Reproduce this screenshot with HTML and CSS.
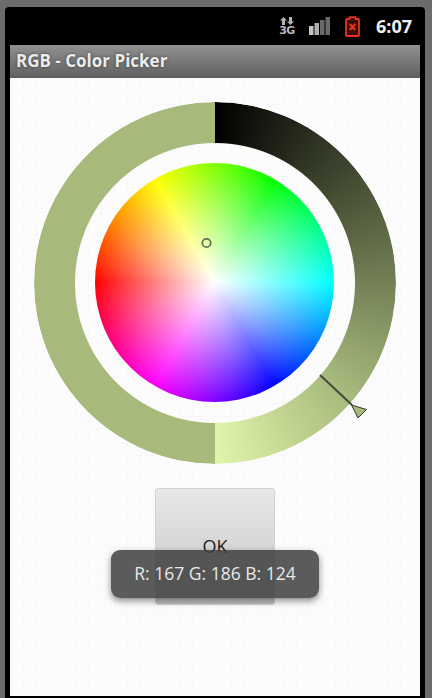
FILE: index.html
```html
<!DOCTYPE html>
<html lang="en">
<head>
<meta charset="utf-8">
<title>RGB - Color Picker</title>
<link rel="stylesheet" href="styles.css">
</head>
<body>
<div class="device">
  <header class="status-bar">
    <div class="net-icon">
      <svg class="net-arrows" width="14" height="8" viewBox="0 0 14 8"><path d="M3.5 0 L7 3.5 H5 V8 H2 V3.5 H0 Z M10.5 8 L7 4.5 H9 V0 H12 V4.5 H14 Z" fill="#b4b4b4"/></svg>
      <span class="net-label">3G</span>
    </div>
    <svg class="signal" width="21" height="18" viewBox="0 0 21 18">
      <rect x="0" y="9" width="4.5" height="9" fill="#c4c4c4"/>
      <rect x="5.5" y="6" width="4.5" height="12" fill="#b0b0b0"/>
      <rect x="11" y="3" width="4.5" height="15" fill="#6a6a6a"/>
      <rect x="16.5" y="0" width="4.5" height="18" fill="#6a6a6a"/>
    </svg>
    <svg class="battery" width="15" height="21" viewBox="0 0 15 21">
      <path d="M4.5 1.2 H10.5 V3 H13 Q14 3 14 4 V19 Q14 20 13 20 H2 Q1 20 1 19 V4 Q1 3 2 3 H4.5 Z" fill="#3a0c06" stroke="#e8341c" stroke-width="1.8"/>
      <path d="M4.8 8 L10.2 14 M10.2 8 L4.8 14" stroke="#e8341c" stroke-width="2.2"/>
    </svg>
    <span class="clock">6:07</span>
  </header>
  <div class="title-bar">RGB - Color Picker</div>
  <main class="content">
    <div class="picker">
      <div class="ring"></div>
      <div class="wheel"></div>
      <svg class="marks" width="362" height="362" viewBox="0 0 362 362">
        <circle cx="172.5" cy="141" r="4.2" fill="none" stroke="#646c52" stroke-width="1.7"/>
        <line x1="286" y1="273" x2="318" y2="303" stroke="#454a3c" stroke-width="2"/>
        <path d="M317.5 303 L332.5 307.5 L324 316 Z" fill="#a7ba7c" stroke="#33382a" stroke-width="1"/>
      </svg>
    </div>
    <button class="ok-button" type="button">OK</button>
    <div class="toast">R: 167 G: 186 B: 124</div>
  </main>
</div>
</body>
</html>
```
FILE: styles.css
```css
* { box-sizing: border-box; }
html, body { margin: 0; height: 100%; overflow: hidden; }
body {
  background-color: #6b6b6b;
  padding: 7px 7px 0 5px;
  font-family: "Open Sans", "Noto Sans", sans-serif;
}
.device {
  height: 691px;
  background: #000;
  border-radius: 4px 4px 0 0;
  padding: 0 5px 2px;
  display: flex;
  flex-direction: column;
}
.status-bar {
  height: 38px;
  display: flex;
  align-items: center;
  justify-content: flex-end;
  padding-right: 7px;
  flex: none;
}
.net-icon {
  width: 14px;
  height: 18px;
  margin-right: 15px;
  display: flex;
  flex-direction: column;
  align-items: center;
}
.net-arrows { display: block; flex: none; }
.net-label {
  font: bold 11px/11px "DejaVu Sans", sans-serif;
  color: #b8b8b8;
  letter-spacing: -0.5px;
}
.signal { margin-right: 15px; flex: none; }
.battery { margin-right: 16px; flex: none; }
.clock {
  color: #f0f0f0;
  font-weight: 700;
  font-size: 18px;
  line-height: 20px;
  width: 37px;
}
.title-bar {
  height: 33px;
  flex: none;
  background: linear-gradient(#919191, #5f5f5f);
  color: #ececec;
  font-weight: 700;
  font-size: 17px;
  line-height: 32px;
  padding-left: 6px;
  text-shadow: 0 0 3px #3a3a3a;
}
.content {
  flex: 1;
  position: relative;
  display: flex;
  flex-direction: column;
  align-items: center;
  padding-top: 24px;
  background-color: #fcfcfc;
  background-image:
    linear-gradient(#f8f8f8 1px, transparent 1px),
    linear-gradient(90deg, #f8f8f8 1px, transparent 1px);
  background-size: 13px 13px;
}
.picker {
  width: 362px;
  height: 362px;
  display: grid;
  place-items: center;
}
.picker > * { grid-area: 1 / 1; }
.ring {
  width: 362px;
  height: 362px;
  border-radius: 50%;
  background: conic-gradient(#000 0deg, #a7ba7c 130deg, #e0f5ab 180deg, #a7ba7c 180deg, #a7ba7c 360deg);
  -webkit-mask: radial-gradient(closest-side, transparent 139.5px, #000 140.5px);
  mask: radial-gradient(closest-side, transparent 139.5px, #000 140.5px);
}
.wheel {
  width: 239px;
  height: 239px;
  margin: 0 1px 1px 0;
  border-radius: 50%;
  background:
    radial-gradient(closest-side, #fff, rgba(255, 255, 255, 0)),
    conic-gradient(from 270deg, #f00, #ff0, #0f0, #0ff, #00f, #f0f, #f00);
}
.marks { display: block; z-index: 1; }
.ok-button {
  width: 120px;
  height: 117px;
  margin-top: 24px;
  padding: 0 0 2px;
  border: 1px solid #d2d2d2;
  border-radius: 3px;
  background: linear-gradient(#e8e8e8, #c4c4c4);
  color: #222;
  font-family: inherit;
  font-size: 18px;
}
.toast {
  position: absolute;
  left: 101px;
  top: 472px;
  width: 208px;
  height: 48px;
  border-radius: 9px;
  background: rgba(64, 64, 64, 0.86);
  box-shadow: 0 3px 7px rgba(0, 0, 0, 0.45);
  color: #e8e8e8;
  font-size: 17.5px;
  line-height: 47px;
  text-align: center;
}
```
